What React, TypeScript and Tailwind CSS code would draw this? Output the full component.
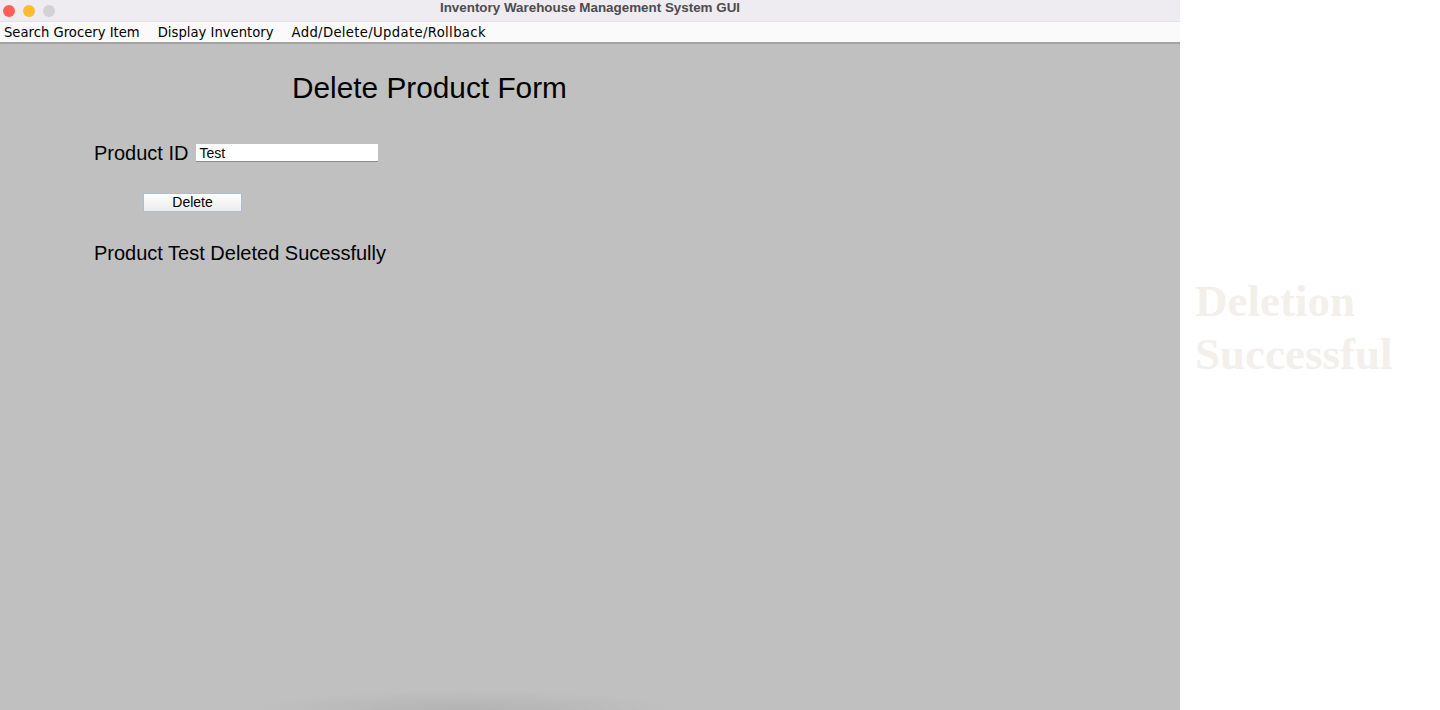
export default function App() {
  return (
    <div className="flex h-[710px] w-[1440px] overflow-hidden bg-white">
      {/* Java Swing window */}
      <div className="relative flex w-[1180px] flex-col bg-[#c0c0c0]">
        {/* title bar */}
        <div className="relative flex h-[22px] items-center border-b border-[#e4e1e7] bg-[#eeebf1]">
          <div className="flex items-center gap-[8px] pl-[3px]">
            <span className="h-[12px] w-[12px] rounded-full bg-[#fe5f57]" />
            <span className="h-[12px] w-[12px] rounded-full bg-[#febc2e]" />
            <span className="h-[12px] w-[12px] rounded-full bg-[#d3d1d6]" />
          </div>
          <div className="absolute inset-x-0 top-0 flex h-[16px] items-center justify-center font-['Liberation_Sans',sans-serif] text-[13.4px] font-bold text-[#4d4b50]">
            Inventory Warehouse Management System GUI
          </div>
        </div>

        {/* menu bar */}
        <div className="flex h-[22px] items-end gap-[18px] border-b-2 border-[#a3a3a3] bg-[#fafafa] pb-[1px] pl-[4px] font-['DejaVu_Sans',sans-serif] text-[13.2px] leading-[16px] text-black">
          <span>Search Grocery Item</span>
          <span>Display Inventory</span>
          <span className="tracking-[0.35px]">Add/Delete/Update/Rollback</span>
        </div>

        {/* form */}
        <div className="flex flex-col font-['Liberation_Sans',Arial,sans-serif] text-black">
          <h1 className="ml-[292px] mt-[29px] text-[29.8px] leading-[30px]">
            Delete Product Form
          </h1>

          <div className="ml-[94px] mt-[40px] flex h-[20px] items-center gap-[8px]">
            <span className="text-[20px] leading-[20px]">Product ID</span>
            <div className="flex h-[18px] w-[182px] items-center border-b border-[#8a8a8a] bg-white pl-[3px] text-[14px] leading-[18px]">
              Test
            </div>
          </div>

          <button className="ml-[143px] mt-[30px] flex h-[19px] w-[99px] items-center justify-center border border-[#a9bfd3] bg-[linear-gradient(#ffffff,#ececec)] text-[14px] leading-[17px] text-black">
            Delete
          </button>

          <p className="ml-[94px] mt-[31px] text-[20px] leading-[20px]">
            Product Test Deleted Sucessfully
          </p>
        </div>

        <div className="pointer-events-none absolute bottom-[-20px] left-[250px] h-[40px] w-[430px] bg-[radial-gradient(ellipse_at_center,rgba(0,0,0,0.07),transparent_70%)]" />
      </div>

      {/* right caption */}
      <div className="flex-1 bg-white pl-[15px] pt-[275px]">
        <p className="font-['Liberation_Serif',serif] text-[45px] font-bold leading-[53px] text-[#f3f0eb]">
          Deletion
          <br />
          Successful
        </p>
      </div>
    </div>
  );
}
